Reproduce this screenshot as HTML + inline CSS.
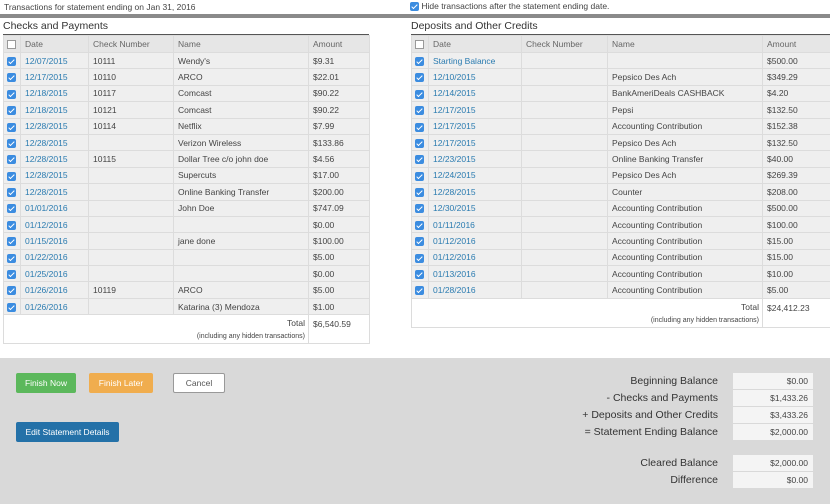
<!DOCTYPE html>
<html><head><style>
*{margin:0;padding:0;box-sizing:border-box}
body{width:830px;height:504px;background:#fff;font-family:"Liberation Sans",sans-serif;color:#444;position:relative;overflow:hidden;font-size:8.5px}
.abs{position:absolute}
.bar{left:0;top:14px;width:830px;height:4px;background:#8a8a8a}
h2{position:absolute;font-weight:normal;font-size:10.5px;color:#333}
table{position:absolute;border-collapse:collapse;table-layout:fixed;border:1px solid #ddd}
td{height:16.4px;line-height:14px;border:1px solid #dcdcdc;background:#efefef;padding:0 0 0 4px;white-space:nowrap;overflow:hidden}
tr.h td{background:#e6e6e6;color:#666;height:17px}
td.d{color:#2a7bb0}
.cb{display:inline-block;width:9px;height:9px;background:#3b8ce0;border-radius:2px;position:relative;vertical-align:middle;margin-left:-1px}
.cb:after{content:"";position:absolute;left:3px;top:1px;width:2px;height:5px;border:solid #fff;border-width:0 1.3px 1.3px 0;transform:rotate(45deg)}
.ucb{display:inline-block;width:9px;height:9px;border:1px solid #999;background:#fff;vertical-align:middle;margin-left:-1px}
tr.t td{background:#fff;height:28px;vertical-align:top;padding-top:2px}
.panel{left:0;top:358px;width:830px;height:146px;background:#d9d9d9}
.btn{position:absolute;color:#fff;font-size:8.5px;text-align:center;border-radius:2px;line-height:20px}
.lab{position:absolute;right:112px;font-size:10.5px;color:#333;text-align:right}
.box{position:absolute;left:733px;width:80px;height:16px;background:#f4f4f4;text-align:right;padding-right:5px;line-height:16px;font-size:8.5px;color:#444}
</style></head><body>
<div class="abs" style="left:4px;top:2px;font-size:8.5px;color:#444">Transactions for statement ending on Jan 31, 2016</div>
<div class="abs" style="left:411px;top:1px;font-size:8.5px;color:#444"><span class="cb"></span> Hide transactions after the statement ending date.</div>
<div class="abs bar"></div>
<h2 style="left:3px;top:20px">Checks and Payments</h2>
<div class="abs" style="left:3px;top:34px;width:366px;height:1px;background:#555"></div>
<h2 style="left:411px;top:20px">Deposits and Other Credits</h2>
<div class="abs" style="left:411px;top:34px;width:419px;height:1px;background:#555"></div>

<table style="left:3px;top:35px;width:366px">
<colgroup><col style="width:17px"><col style="width:68px"><col style="width:85px"><col style="width:135px"><col style="width:61px"></colgroup>
<tr class="h"><td><span class="ucb"></span></td><td>Date</td><td>Check Number</td><td>Name</td><td>Amount</td></tr>
<tr><td><span class="cb"></span></td><td class="d">12/07/2015</td><td>10111</td><td>Wendy's</td><td>$9.31</td></tr>
<tr><td><span class="cb"></span></td><td class="d">12/17/2015</td><td>10110</td><td>ARCO</td><td>$22.01</td></tr>
<tr><td><span class="cb"></span></td><td class="d">12/18/2015</td><td>10117</td><td>Comcast</td><td>$90.22</td></tr>
<tr><td><span class="cb"></span></td><td class="d">12/18/2015</td><td>10121</td><td>Comcast</td><td>$90.22</td></tr>
<tr><td><span class="cb"></span></td><td class="d">12/28/2015</td><td>10114</td><td>Netflix</td><td>$7.99</td></tr>
<tr><td><span class="cb"></span></td><td class="d">12/28/2015</td><td></td><td>Verizon Wireless</td><td>$133.86</td></tr>
<tr><td><span class="cb"></span></td><td class="d">12/28/2015</td><td>10115</td><td>Dollar Tree c/o john doe</td><td>$4.56</td></tr>
<tr><td><span class="cb"></span></td><td class="d">12/28/2015</td><td></td><td>Supercuts</td><td>$17.00</td></tr>
<tr><td><span class="cb"></span></td><td class="d">12/28/2015</td><td></td><td>Online Banking Transfer</td><td>$200.00</td></tr>
<tr><td><span class="cb"></span></td><td class="d">01/01/2016</td><td></td><td>John Doe</td><td>$747.09</td></tr>
<tr><td><span class="cb"></span></td><td class="d">01/12/2016</td><td></td><td></td><td>$0.00</td></tr>
<tr><td><span class="cb"></span></td><td class="d">01/15/2016</td><td></td><td>jane done</td><td>$100.00</td></tr>
<tr><td><span class="cb"></span></td><td class="d">01/22/2016</td><td></td><td></td><td>$5.00</td></tr>
<tr><td><span class="cb"></span></td><td class="d">01/25/2016</td><td></td><td></td><td>$0.00</td></tr>
<tr><td><span class="cb"></span></td><td class="d">01/26/2016</td><td>10119</td><td>ARCO</td><td>$5.00</td></tr>
<tr><td><span class="cb"></span></td><td class="d">01/26/2016</td><td></td><td>Katarina (3) Mendoza</td><td>$1.00</td></tr>
<tr class="t"><td colspan="4" style="text-align:right;padding-right:3px;border-right:1px solid #dcdcdc;line-height:12px">Total<br><span style="font-size:7px">(including any hidden transactions)</span></td><td>$6,540.59</td></tr>
</table>

<table style="left:411px;top:35px;width:419px">
<colgroup><col style="width:17px"><col style="width:93px"><col style="width:86px"><col style="width:155px"><col style="width:68px"></colgroup>
<tr class="h"><td><span class="ucb"></span></td><td>Date</td><td>Check Number</td><td>Name</td><td>Amount</td></tr>
<tr><td><span class="cb"></span></td><td class="d">Starting Balance</td><td></td><td></td><td>$500.00</td></tr>
<tr><td><span class="cb"></span></td><td class="d">12/10/2015</td><td></td><td>Pepsico Des Ach</td><td>$349.29</td></tr>
<tr><td><span class="cb"></span></td><td class="d">12/14/2015</td><td></td><td>BankAmeriDeals CASHBACK</td><td>$4.20</td></tr>
<tr><td><span class="cb"></span></td><td class="d">12/17/2015</td><td></td><td>Pepsi</td><td>$132.50</td></tr>
<tr><td><span class="cb"></span></td><td class="d">12/17/2015</td><td></td><td>Accounting Contribution</td><td>$152.38</td></tr>
<tr><td><span class="cb"></span></td><td class="d">12/17/2015</td><td></td><td>Pepsico Des Ach</td><td>$132.50</td></tr>
<tr><td><span class="cb"></span></td><td class="d">12/23/2015</td><td></td><td>Online Banking Transfer</td><td>$40.00</td></tr>
<tr><td><span class="cb"></span></td><td class="d">12/24/2015</td><td></td><td>Pepsico Des Ach</td><td>$269.39</td></tr>
<tr><td><span class="cb"></span></td><td class="d">12/28/2015</td><td></td><td>Counter</td><td>$208.00</td></tr>
<tr><td><span class="cb"></span></td><td class="d">12/30/2015</td><td></td><td>Accounting Contribution</td><td>$500.00</td></tr>
<tr><td><span class="cb"></span></td><td class="d">01/11/2016</td><td></td><td>Accounting Contribution</td><td>$100.00</td></tr>
<tr><td><span class="cb"></span></td><td class="d">01/12/2016</td><td></td><td>Accounting Contribution</td><td>$15.00</td></tr>
<tr><td><span class="cb"></span></td><td class="d">01/12/2016</td><td></td><td>Accounting Contribution</td><td>$15.00</td></tr>
<tr><td><span class="cb"></span></td><td class="d">01/13/2016</td><td></td><td>Accounting Contribution</td><td>$10.00</td></tr>
<tr><td><span class="cb"></span></td><td class="d">01/28/2016</td><td></td><td>Accounting Contribution</td><td>$5.00</td></tr>
<tr class="t"><td colspan="4" style="text-align:right;padding-right:3px;line-height:12px">Total<br><span style="font-size:7px">(including any hidden transactions)</span></td><td>$24,412.23</td></tr>
</table>

<div class="abs panel"></div>
<div class="btn" style="left:16px;top:373px;width:60px;background:#5cb85c">Finish Now</div>
<div class="btn" style="left:89px;top:373px;width:64px;background:#f0ad4e">Finish Later</div>
<div class="btn" style="left:173px;top:373px;width:52px;background:#fff;color:#555;border:1px solid #999;line-height:18px">Cancel</div>
<div class="btn" style="left:16px;top:422px;width:103px;background:#2471a8">Edit Statement Details</div>

<div class="lab" style="top:375px">Beginning Balance</div>
<div class="lab" style="top:392px">- Checks and Payments</div>
<div class="lab" style="top:409px">+ Deposits and Other Credits</div>
<div class="lab" style="top:426px">= Statement Ending Balance</div>
<div class="lab" style="top:457px">Cleared Balance</div>
<div class="lab" style="top:474px">Difference</div>
<div class="box" style="top:373px">$0.00</div>
<div class="box" style="top:390px">$1,433.26</div>
<div class="box" style="top:407px">$3,433.26</div>
<div class="box" style="top:424px">$2,000.00</div>
<div class="box" style="top:455px">$2,000.00</div>
<div class="box" style="top:472px">$0.00</div>
</body></html>
